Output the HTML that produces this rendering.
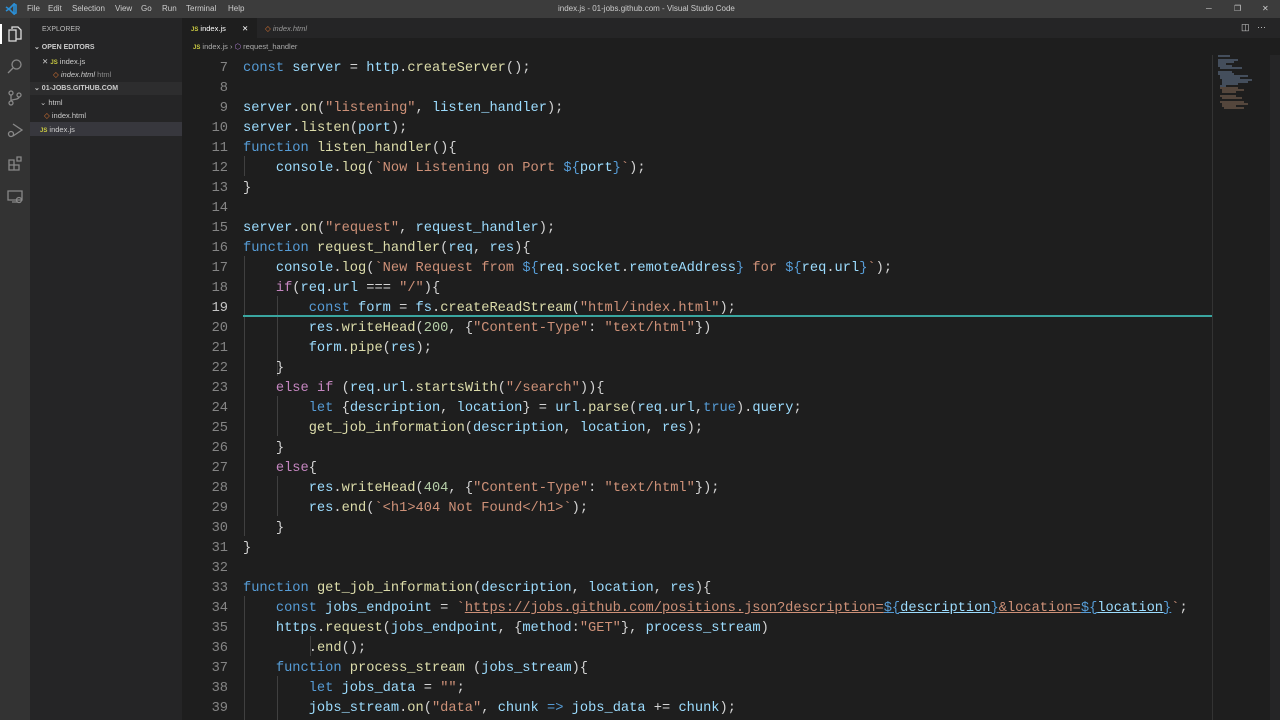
<!DOCTYPE html>
<html><head><meta charset="utf-8"><style>
*{margin:0;padding:0;box-sizing:border-box}
body{width:1280px;height:720px;background:#1e1e1e;overflow:hidden;position:relative;font-family:"Liberation Sans",sans-serif;color:#ccc}
.abs{position:absolute}
#title{left:0;top:0;width:1280px;height:18px;background:#3c3c3c;font-size:8px;color:#ccc}
#title span{position:absolute;top:4px}
#act{left:0;top:18px;width:30px;height:702px;background:#333}
#side{left:30px;top:18px;width:152px;height:702px;background:#252526;font-size:7.5px}
#side div{position:absolute;white-space:nowrap}
#tabs{left:182px;top:18px;width:1098px;height:20px;background:#252526}
#crumb{left:182px;top:38px;width:1098px;height:17px;background:#1e1e1e;font-size:7.5px;color:#aaa}
#code{left:182px;top:56px;width:1030px;height:664px;overflow:hidden}
.ln{position:absolute;left:0;width:46px;text-align:right;color:#858585;font:13.7px/20px "Liberation Mono",monospace}
.cl{position:absolute;left:61px;white-space:pre;color:#d4d4d4;font:13.7px/20px "Liberation Mono",monospace}
.k{color:#569cd6}.c{color:#c586c0}.v{color:#9cdcfe}.f{color:#dcdcaa}.s{color:#ce9178}.n{color:#b5cea8}.u{text-decoration:underline}
.g{position:absolute;width:1px;background:#404040}
</style></head><body>
<div id="title" class="abs">
<svg class="abs" style="left:5px;top:3px" width="12" height="12" viewBox="0 0 12 12"><path d="M9 1L4 6l5 5V1zM9 1l2 1v8l-2 1M1 4l3 2-3 2" fill="none" stroke="#2b8fd6" stroke-width="1.6"/></svg>
<span style="left:27px">File</span><span style="left:48px">Edit</span><span style="left:72px">Selection</span><span style="left:115px">View</span><span style="left:141px">Go</span><span style="left:162px">Run</span><span style="left:186px">Terminal</span><span style="left:228px">Help</span>
<span style="left:558px">index.js - 01-jobs.github.com - Visual Studio Code</span>
<span style="left:1206px">─</span><span style="left:1234px">❐</span><span style="left:1262px">✕</span>
</div>
<div id="act" class="abs">
<div class="abs" style="left:0;top:6px;width:2px;height:20px;background:#fff"></div>
<svg class="abs" style="left:7px;top:8px" width="16" height="16" viewBox="0 0 16 16" fill="none" stroke="#ddd" stroke-width="1.3"><path d="M5 3V1h6l3 3v9H9M2 4h7v11H2z"/></svg>
<svg class="abs" style="left:7px;top:40px" width="16" height="16" viewBox="0 0 16 16" fill="none" stroke="#888" stroke-width="1.3"><circle cx="9.5" cy="6.5" r="4.5"/><path d="M6 10l-5 5"/></svg>
<svg class="abs" style="left:7px;top:72px" width="16" height="16" viewBox="0 0 16 16" fill="none" stroke="#888" stroke-width="1.3"><circle cx="4" cy="3" r="2"/><circle cx="4" cy="13" r="2"/><circle cx="12" cy="5" r="2"/><path d="M4 5v6M12 7c0 3-8 2-8 4"/></svg>
<svg class="abs" style="left:7px;top:104px" width="16" height="16" viewBox="0 0 16 16" fill="none" stroke="#888" stroke-width="1.3"><path d="M6 2l9 6-9 6"/><circle cx="4" cy="12" r="2.5"/></svg>
<svg class="abs" style="left:7px;top:137px" width="16" height="16" viewBox="0 0 16 16" fill="none" stroke="#888" stroke-width="1.3"><path d="M2 5h5v5H2zM2 10h5v5H2zM7 10h5v5H7zM10 2h4v4h-4z"/></svg>
<svg class="abs" style="left:7px;top:170px" width="16" height="16" viewBox="0 0 16 16" fill="none" stroke="#888" stroke-width="1.3"><path d="M1 3h14v9H1zM5 14h6"/><circle cx="12" cy="12" r="2.5"/></svg>
</div>
<div id="side" class="abs">
<div style="left:12px;top:8px;color:#bbb;font-size:7px">EXPLORER</div>
<div style="left:4px;top:25px;font-weight:bold;font-size:7px">⌄ OPEN EDITORS</div>
<div style="left:12px;top:39px">✕ <b style="color:#cbcb41;font-size:6px">JS</b> index.js</div>
<div style="left:23px;top:52px"><span style="color:#e37933">◇</span> <i>index.html</i> <span style="color:#888">html</span></div>
<div style="left:0;top:64px;width:152px;height:13px;background:#2d2d2e"></div>
<div style="left:4px;top:66px;font-weight:bold;font-size:7px">⌄ 01-JOBS.GITHUB.COM</div>
<div style="left:10px;top:80px">⌄ html</div>
<div style="left:14px;top:93px"><span style="color:#e37933">◇</span> index.html</div>
<div style="left:0;top:104px;width:152px;height:14px;background:#37373d"></div>
<div style="left:10px;top:107px"><b style="color:#cbcb41;font-size:6px">JS</b> index.js</div>
</div>
<div id="tabs" class="abs">
<div class="abs" style="left:0;top:0;width:75px;height:20px;background:#1e1e1e;font-size:7.5px;color:#fff;padding:6px 0 0 9px"><b style="color:#cbcb41;font-size:6px">JS</b> index.js <span style="margin-left:14px">✕</span></div>
<div class="abs" style="left:83px;top:6px;font-size:7.5px;color:#999"><span style="color:#e37933">◇</span> <i>index.html</i></div>
<div class="abs" style="left:1059px;top:4px;font-size:9px;color:#ccc">◫ &nbsp; ···</div>
</div>
<div id="crumb" class="abs"><div class="abs" style="left:11px;top:4px"><b style="color:#cbcb41;font-size:6px">JS</b> index.js › <span style="color:#b180d7">⬡</span> request_handler</div></div>
<div id="code" class="abs">
<div class="g" style="left:62px;top:100px;height:20px"></div>
<div class="g" style="left:62px;top:200px;height:280px"></div>
<div class="g" style="left:95px;top:240px;height:80px"></div>
<div class="g" style="left:95px;top:340px;height:40px"></div>
<div class="g" style="left:95px;top:420px;height:40px"></div>
<div class="g" style="left:62px;top:540px;height:140px"></div>
<div class="g" style="left:128px;top:580px;height:20px"></div>
<div class="g" style="left:95px;top:620px;height:60px"></div>
<div class="abs" style="left:61px;top:259px;width:969px;height:2px;background:#3aa6a0"></div>
<div class="ln" style="top:3px">7</div><div class="cl" style="top:3px"><span class="k">const</span> <span class="v">server</span> = <span class="v">http</span>.<span class="f">createServer</span>();</div>
<div class="ln" style="top:23px">8</div>
<div class="ln" style="top:43px">9</div><div class="cl" style="top:43px"><span class="v">server</span>.<span class="f">on</span>(<span class="s">"listening"</span>, <span class="v">listen_handler</span>);</div>
<div class="ln" style="top:63px">10</div><div class="cl" style="top:63px"><span class="v">server</span>.<span class="f">listen</span>(<span class="v">port</span>);</div>
<div class="ln" style="top:83px">11</div><div class="cl" style="top:83px"><span class="k">function</span> <span class="f">listen_handler</span>(){</div>
<div class="ln" style="top:103px">12</div><div class="cl" style="top:103px">    <span class="v">console</span>.<span class="f">log</span>(<span class="s">`Now Listening on Port </span><span class="k">${</span><span class="v">port</span><span class="k">}</span><span class="s">`</span>);</div>
<div class="ln" style="top:123px">13</div><div class="cl" style="top:123px">}</div>
<div class="ln" style="top:143px">14</div>
<div class="ln" style="top:163px">15</div><div class="cl" style="top:163px"><span class="v">server</span>.<span class="f">on</span>(<span class="s">"request"</span>, <span class="v">request_handler</span>);</div>
<div class="ln" style="top:183px">16</div><div class="cl" style="top:183px"><span class="k">function</span> <span class="f">request_handler</span>(<span class="v">req</span>, <span class="v">res</span>){</div>
<div class="ln" style="top:203px">17</div><div class="cl" style="top:203px">    <span class="v">console</span>.<span class="f">log</span>(<span class="s">`New Request from </span><span class="k">${</span><span class="v">req</span>.<span class="v">socket</span>.<span class="v">remoteAddress</span><span class="k">}</span><span class="s"> for </span><span class="k">${</span><span class="v">req</span>.<span class="v">url</span><span class="k">}</span><span class="s">`</span>);</div>
<div class="ln" style="top:223px">18</div><div class="cl" style="top:223px">    <span class="c">if</span>(<span class="v">req</span>.<span class="v">url</span> === <span class="s">"/"</span>){</div>
<div class="ln" style="top:243px;color:#c6c6c6">19</div><div class="cl" style="top:243px">        <span class="k">const</span> <span class="v">form</span> = <span class="v">fs</span>.<span class="f">createReadStream</span>(<span class="s">"html/index.html"</span>);</div>
<div class="ln" style="top:263px">20</div><div class="cl" style="top:263px">        <span class="v">res</span>.<span class="f">writeHead</span>(<span class="n">200</span>, {<span class="s">"Content-Type"</span>: <span class="s">"text/html"</span>})</div>
<div class="ln" style="top:283px">21</div><div class="cl" style="top:283px">        <span class="v">form</span>.<span class="f">pipe</span>(<span class="v">res</span>);</div>
<div class="ln" style="top:303px">22</div><div class="cl" style="top:303px">    }</div>
<div class="ln" style="top:323px">23</div><div class="cl" style="top:323px">    <span class="c">else</span> <span class="c">if</span> (<span class="v">req</span>.<span class="v">url</span>.<span class="f">startsWith</span>(<span class="s">"/search"</span>)){</div>
<div class="ln" style="top:343px">24</div><div class="cl" style="top:343px">        <span class="k">let</span> {<span class="v">description</span>, <span class="v">location</span>} = <span class="v">url</span>.<span class="f">parse</span>(<span class="v">req</span>.<span class="v">url</span>,<span class="k">true</span>).<span class="v">query</span>;</div>
<div class="ln" style="top:363px">25</div><div class="cl" style="top:363px">        <span class="f">get_job_information</span>(<span class="v">description</span>, <span class="v">location</span>, <span class="v">res</span>);</div>
<div class="ln" style="top:383px">26</div><div class="cl" style="top:383px">    }</div>
<div class="ln" style="top:403px">27</div><div class="cl" style="top:403px">    <span class="c">else</span>{</div>
<div class="ln" style="top:423px">28</div><div class="cl" style="top:423px">        <span class="v">res</span>.<span class="f">writeHead</span>(<span class="n">404</span>, {<span class="s">"Content-Type"</span>: <span class="s">"text/html"</span>});</div>
<div class="ln" style="top:443px">29</div><div class="cl" style="top:443px">        <span class="v">res</span>.<span class="f">end</span>(<span class="s">`&lt;h1&gt;404 Not Found&lt;/h1&gt;`</span>);</div>
<div class="ln" style="top:463px">30</div><div class="cl" style="top:463px">    }</div>
<div class="ln" style="top:483px">31</div><div class="cl" style="top:483px">}</div>
<div class="ln" style="top:503px">32</div>
<div class="ln" style="top:523px">33</div><div class="cl" style="top:523px"><span class="k">function</span> <span class="f">get_job_information</span>(<span class="v">description</span>, <span class="v">location</span>, <span class="v">res</span>){</div>
<div class="ln" style="top:543px">34</div><div class="cl" style="top:543px">    <span class="k">const</span> <span class="v">jobs_endpoint</span> = <span class="s">`<span class="u">https://jobs.github.com/positions.json?description=</span></span><span class="k u">${</span><span class="v u">description</span><span class="k u">}</span><span class="s u">&amp;location=</span><span class="k u">${</span><span class="v u">location</span><span class="k u">}</span><span class="s">`</span>;</div>
<div class="ln" style="top:563px">35</div><div class="cl" style="top:563px">    <span class="v">https</span>.<span class="f">request</span>(<span class="v">jobs_endpoint</span>, {<span class="v">method</span>:<span class="s">"GET"</span>}, <span class="v">process_stream</span>)</div>
<div class="ln" style="top:583px">36</div><div class="cl" style="top:583px">        .<span class="f">end</span>();</div>
<div class="ln" style="top:603px">37</div><div class="cl" style="top:603px">    <span class="k">function</span> <span class="f">process_stream</span> (<span class="v">jobs_stream</span>){</div>
<div class="ln" style="top:623px">38</div><div class="cl" style="top:623px">        <span class="k">let</span> <span class="v">jobs_data</span> = <span class="s">""</span>;</div>
<div class="ln" style="top:643px">39</div><div class="cl" style="top:643px">        <span class="v">jobs_stream</span>.<span class="f">on</span>(<span class="s">"data"</span>, <span class="v">chunk</span> <span class="k">=&gt;</span> <span class="v">jobs_data</span> += <span class="v">chunk</span>);</div>
</div>
<div class="abs" style="left:1212px;top:55px;width:58px;height:665px;background:#1e1e1e;border-left:1px solid #333">
<svg width="58" height="60" style="position:absolute;left:3px;top:0" stroke-width="1">
<g stroke="#6a7f9a"><path d="M2 1h12M2 5h20M2 7h16M2 9h8M2 11h14M4 13h22M2 17h14M2 19h16M4 21h28M4 23h20M6 25h30M6 27h26M6 29h16M4 31h6"/></g>
<g stroke="#8a6f5a"><path d="M4 33h18M6 35h22M6 37h14M4 41h16M6 43h20M4 47h24M6 49h26M6 51h14M8 53h20"/></g>
</svg></div>
<div class="abs" style="left:1270px;top:55px;width:10px;height:665px;background:#252526"></div>
</body></html>
